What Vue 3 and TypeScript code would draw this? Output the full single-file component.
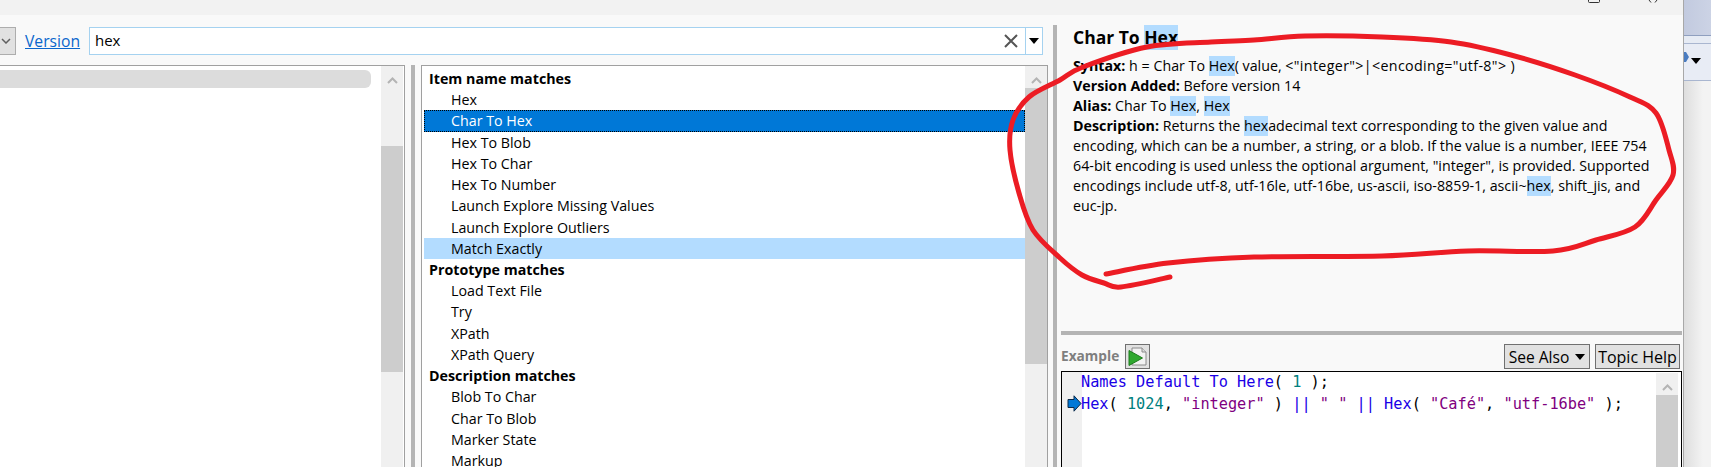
<script setup lang="ts">
interface Row { text: string; kind: 'head' | 'item' | 'sel' | 'soft' }

const rows: Row[] = [
  { text: 'Item name matches', kind: 'head' },
  { text: 'Hex', kind: 'item' },
  { text: 'Char To Hex', kind: 'sel' },
  { text: 'Hex To Blob', kind: 'item' },
  { text: 'Hex To Char', kind: 'item' },
  { text: 'Hex To Number', kind: 'item' },
  { text: 'Launch Explore Missing Values', kind: 'item' },
  { text: 'Launch Explore Outliers', kind: 'item' },
  { text: 'Match Exactly', kind: 'soft' },
  { text: 'Prototype matches', kind: 'head' },
  { text: 'Load Text File', kind: 'item' },
  { text: 'Try', kind: 'item' },
  { text: 'XPath', kind: 'item' },
  { text: 'XPath Query', kind: 'item' },
  { text: 'Description matches', kind: 'head' },
  { text: 'Blob To Char', kind: 'item' },
  { text: 'Char To Blob', kind: 'item' },
  { text: 'Marker State', kind: 'item' },
  { text: 'Markup', kind: 'item' },
]

const pts: [number, number][] = [
  [1106, 274], [1168, 263], [1254, 257], [1382, 256], [1468, 251], [1553, 251], [1596, 240],
  [1635, 227], [1656, 200], [1673, 175], [1669, 150], [1656, 113], [1630, 97], [1575, 75],
  [1511, 55], [1451, 42], [1382, 37], [1305, 36], [1254, 40], [1211, 42], [1147, 47],
  [1083, 67], [1060, 80], [1029, 97], [1013, 120], [1010, 150], [1019, 193], [1033, 230],
  [1060, 258], [1082, 275], [1104, 283], [1121, 287], [1170, 277],
]

function smooth(p: [number, number][]): string {
  let d = `M${p[0][0]} ${p[0][1]}`
  for (let i = 0; i < p.length - 1; i++) {
    const a = p[Math.max(i - 1, 0)]
    const b = p[i]
    const c = p[i + 1]
    const e = p[Math.min(i + 2, p.length - 1)]
    const c1x = b[0] + (c[0] - a[0]) / 6
    const c1y = b[1] + (c[1] - a[1]) / 6
    const c2x = c[0] - (e[0] - b[0]) / 6
    const c2y = c[1] - (e[1] - b[1]) / 6
    d += ` C${c1x.toFixed(1)} ${c1y.toFixed(1)} ${c2x.toFixed(1)} ${c2y.toFixed(1)} ${c[0]} ${c[1]}`
  }
  return d
}

const ink = smooth(pts)
</script>

<template>
  <div class="screen">
    <div class="window">
      <div class="titlebar">
        <svg class="ctl ctl-max" width="12" height="3" viewBox="0 0 12 3"><path d="M0.5 0V1.5a1 1 0 0 0 1 1h9a1 1 0 0 0 1-1V0" fill="none" stroke="#333" /></svg>
        <svg class="ctl" width="12" height="3" viewBox="0 0 12 3"><path d="M2 0L4 2.5M10 0L8 2.5" fill="none" stroke="#333" /></svg>
      </div>
      <div class="workspace">
        <div class="browser">
          <div class="toolbar">
            <div class="combo">
              <svg width="10" height="6" viewBox="0 0 10 6"><path d="M1 1L5 5L9 1" fill="none" stroke="#606060" stroke-width="1.5" /></svg>
            </div>
            <a class="version">Version</a>
            <div class="search">
              <span class="search-text">hex</span>
              <svg class="clear" width="14" height="14" viewBox="0 0 14 14"><path d="M1 1L13 13M13 1L1 13" stroke="#555" stroke-width="2" /></svg>
              <div class="search-drop"><i class="tri"></i></div>
            </div>
          </div>
          <div class="lists">
            <div class="list list-left">
              <div class="list-body">
                <div class="group-bar"></div>
              </div>
              <div class="scroll scroll-left">
                <div class="scroll-up">
                  <svg width="11" height="7" viewBox="0 0 11 7"><path d="M1 6L5.5 1.5L10 6" fill="none" stroke="#b4b4b4" stroke-width="2" /></svg>
                </div>
                <div class="track-a"></div>
                <div class="thumb thumb-left"></div>
              </div>
            </div>
            <div class="vsplit"></div>
            <div class="list list-right">
              <div class="list-body rows">
                <div v-for="r in rows" :key="r.text" class="row" :class="r.kind">{{ r.text }}</div>
              </div>
              <div class="scroll">
                <div class="scroll-up">
                  <svg width="11" height="7" viewBox="0 0 11 7"><path d="M1 6L5.5 1.5L10 6" fill="none" stroke="#b4b4b4" stroke-width="2" /></svg>
                </div>
                <div class="thumb thumb-right"></div>
              </div>
            </div>
          </div>
        </div>
        <div class="vsplit vsplit-main"></div>
        <div class="details">
          <div class="doc">
            <h1 class="title">Char To <span class="hl">Hex</span></h1>
            <div class="line"><b>Syntax:</b> h = Char To <span class="hl">Hex</span>( value, <span class="args">&lt;"integer"&gt;|&lt;encoding="utf-8"&gt; )</span></div>
            <div class="line"><b>Version Added:</b> Before version 14</div>
            <div class="line"><b>Alias:</b> Char To <span class="hl">Hex</span>, <span class="hl">Hex</span></div>
            <div class="line"><b>Description:</b> Returns the <span class="hl">hex</span>adecimal text corresponding to the given value and</div>
            <div class="line">encoding, which can be a number, a string, or a blob. If the value is a number, IEEE 754</div>
            <div class="line">64-bit encoding is used unless the optional argument, "integer", is provided. Supported</div>
            <div class="line">encodings include utf-8, utf-16le, utf-16be, us-ascii, iso-8859-1, ascii~<span class="hl">hex</span>, shift_jis, and</div>
            <div class="line">euc-jp.</div>
          </div>
          <div class="hsplit"></div>
          <div class="example-bar">
            <span class="example-label">Example</span>
            <button class="btn icon-btn">
              <svg width="20" height="20" viewBox="0 0 20 20">
                <path d="M4 1H14L18 5V18H4Z" fill="#f2f2f2" stroke="#8a8a8a" />
                <path d="M14 1V5H18" fill="#dcdcdc" stroke="#8a8a8a" />
                <path d="M1 3.5L14.5 11L1 18.5Z" fill="#2fa82f" stroke="#1c7a1c" />
              </svg>
            </button>
            <span class="spacer"></span>
            <button class="btn see-also">See Also <i class="tri"></i></button>
            <button class="btn topic">Topic Help</button>
          </div>
          <div class="editor">
            <div class="gutter">
              <svg class="exec" width="15" height="17" viewBox="0 0 15 17"><path d="M1 4.5H7V0.8L14 8.5L7 16.2V12.5H1Z" fill="#0078d7" stroke="#0b2a4a" /></svg>
            </div>
            <div class="code">
              <div><span class="k">Names Default To Here</span>( <span class="n">1</span> );</div>
              <div><span class="k">Hex</span>( <span class="n">1024</span>, <span class="s">"integer"</span> ) <span class="k">||</span> <span class="s">" "</span> <span class="k">||</span> <span class="k">Hex</span>( <span class="s">"Café"</span>, <span class="s">"utf-16be"</span> );</div>
            </div>
            <div class="scroll scroll-code">
              <div class="scroll-up">
                <svg width="11" height="7" viewBox="0 0 11 7"><path d="M1 6L5.5 1.5L10 6" fill="none" stroke="#b4b4b4" stroke-width="2" /></svg>
              </div>
              <div class="thumb thumb-code"></div>
            </div>
          </div>
        </div>
      </div>
    </div>
    <div class="strip">
      <div class="strip-top"></div>
      <div class="strip-band"></div>
      <div class="strip-tool">
        <i class="strip-icon"></i>
        <i class="tri strip-tri"></i>
      </div>
      <div class="strip-rest"></div>
    </div>
    <svg class="ink" width="1711" height="467" viewBox="0 0 1711 467">
      <path :d="ink" fill="none" stroke="#ec1c24" stroke-width="5" stroke-linecap="round" stroke-linejoin="round" />
    </svg>
  </div>
</template>

<style>
html, body { margin: 0; background: #f2f2f2; }
</style>

<style scoped>
.screen {
  position: relative;
  display: flex;
  width: 1711px;
  height: 467px;
  overflow: hidden;
  font-family: "Open Sans", "Noto Sans", sans-serif;
  font-size: 14.25px;
  color: #000;
}
.window {
  width: 1684px;
  box-sizing: border-box;
  border-right: 1px solid #a8a8a8;
  background: #f9f9f9;
  display: flex;
  flex-direction: column;
}
.titlebar {
  height: 15px;
  flex: none;
  background: #f2f2f2;
  display: flex;
  justify-content: flex-end;
  align-items: flex-start;
  gap: 47px;
  padding-right: 24px;
}
.ctl { display: block; }
.workspace { flex: 1; display: flex; min-height: 0; }
.browser { width: 1053px; flex: none; padding-top: 12px; display: flex; flex-direction: column; box-sizing: border-box; }
.toolbar { display: flex; align-items: flex-start; height: 38px; flex: none; }
.combo {
  width: 16px;
  height: 28px;
  box-sizing: border-box;
  background: #e1e1e1;
  border: 1px solid #adadad;
  border-left: none;
  display: flex;
  align-items: center;
  padding-left: 1px;
}
.version {
  margin-left: 9px;
  width: 64px;
  line-height: 28px;
  font-size: 15.7px;
  color: #0a66cc;
  text-decoration: underline;
}
.search {
  width: 954px;
  height: 28px;
  box-sizing: border-box;
  border: 1px solid #a5d2f0;
  background: #fff;
  display: flex;
  align-items: center;
  padding-left: 5px;
}
.search-text { flex: 1; font-size: 15px; line-height: 24px; margin-top: -2px; }
.clear { margin-right: 7px; }
.search-drop {
  width: 16px;
  height: 100%;
  border-left: 1px solid #a5d2f0;
  display: flex;
  align-items: center;
  justify-content: center;
}
.tri {
  display: inline-block;
  width: 0;
  height: 0;
  border-left: 5px solid transparent;
  border-right: 5px solid transparent;
  border-top: 6px solid #000;
}
.lists { flex: 1; display: flex; min-height: 0; }
.list {
  display: flex;
  background: #fff;
  border: 1px solid #a0a0a0;
  border-bottom: none;
  box-sizing: border-box;
}
.list-left { width: 405px; border-left: none; }
.list-right { width: 627px; margin-left: 6px; padding-left: 2px; }
.list-body { flex: 1; min-width: 0; padding-top: 4px; }
.group-bar { height: 18px; width: 371px; background: #dcdcdc; border-radius: 0 6px 6px 0; }
.scroll { width: 22px; flex: none; background: #f0f0f0; display: flex; flex-direction: column; margin-right: 0; }
.scroll-left { margin-right: 1px; }
.scroll-up { height: 22px; flex: none; display: flex; align-items: center; justify-content: center; padding-top: 6px; box-sizing: border-box; }
.track-a { height: 58px; flex: none; }
.thumb { background: #cdcdcd; flex: none; }
.thumb-left { height: 226px; }
.thumb-right { height: 276px; margin-top: 0; }
.vsplit { width: 4px; flex: none; background: #b4b4b4; margin-left: 6px; }
.vsplit-main { margin-left: 0; margin-top: 10px; }
.rows { padding-top: 2px; }
.row {
  height: 21.22px;
  line-height: 21.22px;
  padding-left: 27px;
  white-space: nowrap;
  box-sizing: border-box;
}
.row.head { font-weight: 700; padding-left: 5px; }
.row.sel { background: #0078d7; color: #fff; outline: 1px dotted #000; outline-offset: -1px; }
.row.soft { background: #b3dcff; }
.details { flex: 1; min-width: 0; display: flex; flex-direction: column; }
.doc { height: 316px; flex: none; box-sizing: border-box; padding: 10px 0 0 16px; }
.title { margin: 0 0 6px; font-size: 17.5px; line-height: 25px; font-weight: 700; }
.line { height: 20px; line-height: 20px; white-space: nowrap; }
.hl { background: #b3dcff; display: inline-block; }
.args { letter-spacing: 0.35px; }
.hsplit { height: 4px; flex: none; background: #b4b4b4; margin: 0 1px 0 4px; }
.example-bar { height: 36px; flex: none; box-sizing: border-box; display: flex; align-items: flex-start; padding: 9px 3px 0 4px; }
.example-label { font-weight: 700; font-size: 13.7px; color: #7f7f7f; line-height: 24px; width: 64px; }
.spacer { flex: 1; }
.btn {
  height: 25px;
  box-sizing: border-box;
  border: 1px solid #707070;
  background: #e1e1e1;
  font: inherit;
  font-size: 15.6px;
  padding: 0;
  color: #000;
  display: flex;
  align-items: center;
  justify-content: center;
  white-space: nowrap;
}
.icon-btn { width: 25px; }
.see-also { width: 86px; gap: 6px; }
.topic { width: 85px; margin-left: 5px; font-size: 16px; }
.editor {
  flex: 1;
  margin: 0 1px 0 4px;
  border: 1px solid #000;
  border-bottom: none;
  background: #fff;
  display: flex;
  min-height: 0;
}
.gutter { width: 20px; flex: none; background: #f0f0f0; padding: 23px 0 0 5px; box-sizing: border-box; }
.exec { display: block; }
.code {
  flex: 1;
  min-width: 0;
  margin-top: -1px;
  margin-left: -1px;
  font-family: "DejaVu Sans Mono", "Liberation Mono", monospace;
  font-size: 15.25px;
  line-height: 22px;
  white-space: pre;
  color: #000;
}
.k { color: #1a00e6; }
.n { color: #008080; }
.s { color: #800080; }
.scroll-code { margin: 1px 3px 0 0; }
.thumb-code { flex: 1; }
.strip { flex: 1; display: flex; flex-direction: column; }
.strip-top { height: 35px; flex: none; background: linear-gradient(90deg, #c2cadf, #ccd3e5); border-bottom: 1px solid #8f9fbf; }
.strip-band { height: 7px; flex: none; background: #e6ebf4; border-bottom: 1px solid #a9b6d0; }
.strip-tool { height: 36px; flex: none; background: #e8ecf5; border-bottom: 1px solid #a9b6d0; position: relative; }
.strip-icon { position: absolute; left: 0; top: 8px; width: 5px; height: 10px; background: #4a7cc0; clip-path: polygon(0 0, 40% 0, 100% 50%, 40% 100%, 0 100%); }
.strip-tri { position: absolute; left: 7px; top: 14px; }
.strip-rest { flex: 1; background: linear-gradient(90deg, #dedede, #f3f3f3 70%); }
.ink { position: absolute; left: 0; top: 0; pointer-events: none; }
</style>
